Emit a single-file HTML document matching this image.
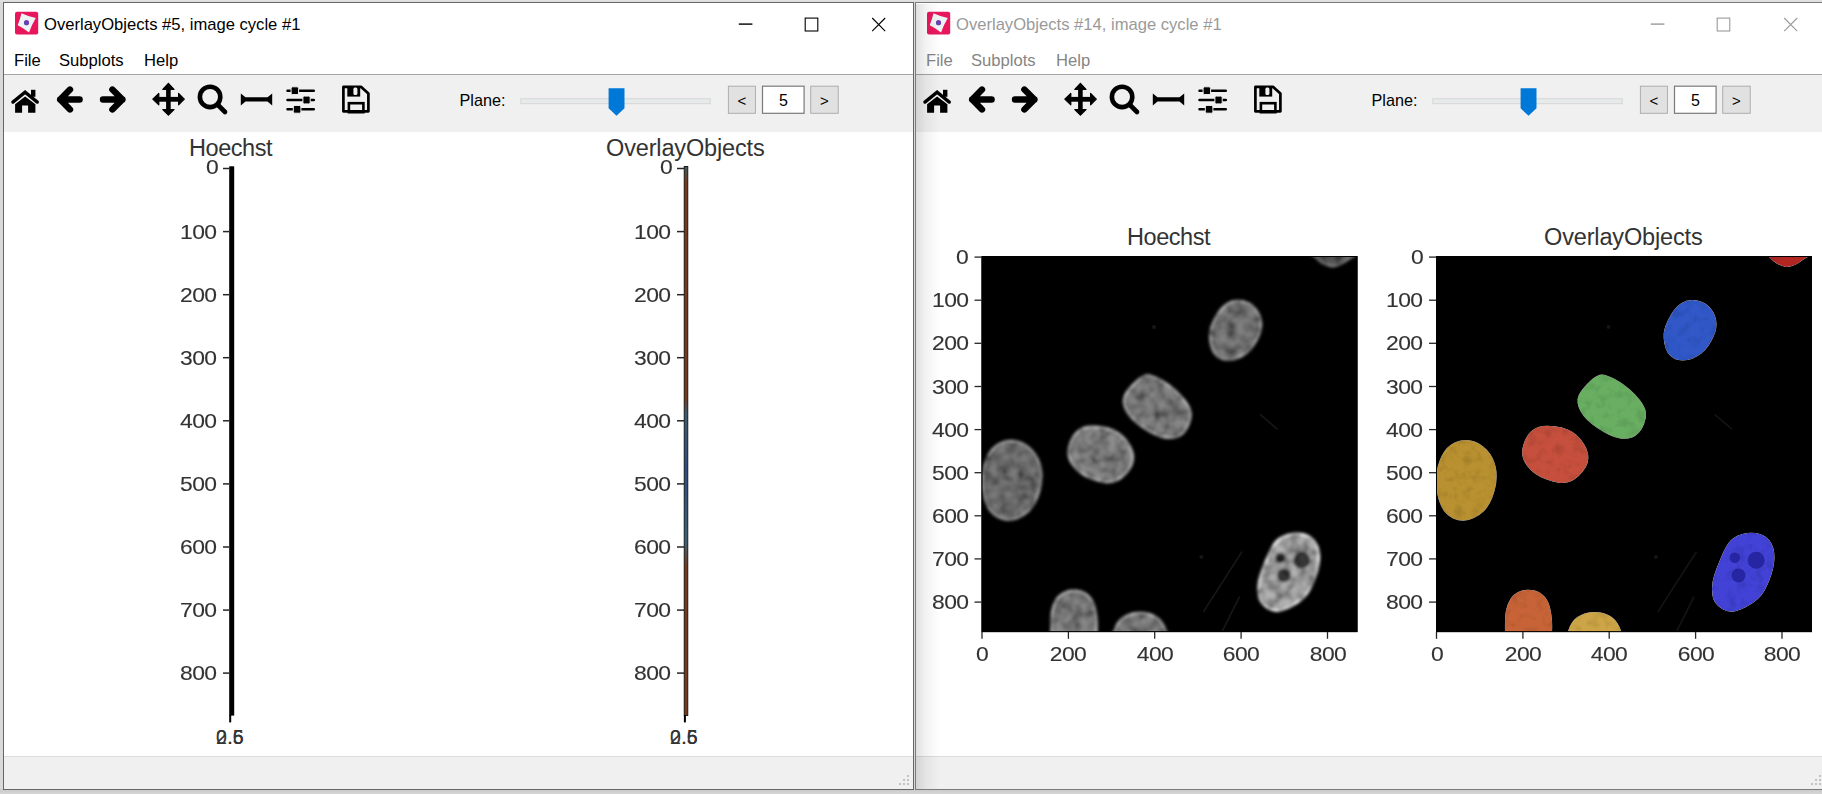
<!DOCTYPE html><html><head><meta charset="utf-8"><style>
*{margin:0;padding:0;box-sizing:border-box}
html,body{width:1822px;height:794px;overflow:hidden;background:linear-gradient(to bottom,#e2e2e2 0px,#d9d9d9 3px,#d9d9d9 788px,#cbcbcb 790px,#d6d6d6 794px);font-family:"Liberation Sans",sans-serif;position:relative}
.a{position:absolute;white-space:nowrap}
.ui{font-size:16.6px;color:#000}
.lb{font-size:21px;color:#333;letter-spacing:-0.5px;-webkit-text-stroke:0.12px #333;transform:scaleX(1.09);transform-origin:100% 50%}
.lbc{transform-origin:50% 50%}
.tl{font-size:23.5px;color:#333;letter-spacing:-0.45px}
</style></head><body>
<div class="a" style="left:914.8px;top:2px;width:911px;height:787.8px;background:#fff;border:1.5px solid #7a7a7a"></div>
<svg class="a" style="left:912px;top:0px" width="912" height="794" viewBox="0 0 912 794">
<rect x="15" y="11.8" width="23.2" height="22.6" rx="2" fill="#e8175c"/>
<path d="M21.5,13.2 Q28.5,16.5 35.8,17.9 Q31.5,25 29,32.6 Q23.5,28 17.7,25.3 Q20,19.5 21.5,13.2Z" fill="#eef4f4"/>
<circle cx="26.5" cy="22.7" r="2.6" fill="#6a3fb5"/>
<!-- min max close -->
<rect x="738.8" y="23.4" width="13.6" height="1.4" fill="#9a9a9a"/>
<rect x="805.2" y="18.1" width="12.6" height="12.9" fill="none" stroke="#9a9a9a" stroke-width="1.1"/>
<path d="M872.2,18 L885.2,31.2 M885.2,18 L872.2,31.2" stroke="#9a9a9a" stroke-width="1.1"/>
</svg>
<div class="a ui" style="left:956px;top:15px;color:#9a9a9a">OverlayObjects #14, image cycle #1</div>
<div class="a ui" style="left:926px;top:51px;color:#858585">File</div>
<div class="a ui" style="left:971px;top:51px;color:#858585">Subplots</div>
<div class="a ui" style="left:1056px;top:51px;color:#858585">Help</div>
<div class="a" style="left:916px;top:73.6px;width:909px;height:2px;background:#a6a6a6"></div>
<div class="a" style="left:916px;top:75px;width:909px;height:56.8px;background:#f0f0f0"></div>
<div class="a" style="left:916px;top:756px;width:909px;height:33px;background:#f0f0f0;border-top:1.5px solid #dcdcdc"></div>
<svg class="a" style="left:912px;top:0px" width="912" height="794" viewBox="0 0 912 794">
<g fill="#000" stroke="none">
<path d="M12.9,102.1 L25.1,92.2 L37.3,102.1" fill="none" stroke="#000" stroke-width="3.3" stroke-linecap="round" stroke-linejoin="miter"/>
<rect x="31" y="89.8" width="4.4" height="7"/>
<path d="M25.1,96.4 L35.4,104.3 L35.4,112.8 L28.1,112.8 L28.1,105.4 L22.1,105.4 L22.1,112.8 L15.1,112.8 L15.1,104.3Z"/>
</g>
<g fill="none" stroke="#000" stroke-width="6.4" stroke-linecap="round" stroke-linejoin="round">
<path d="M70,89.6 L60.2,99.5 L70,109.4 M60.2,99.5 L79.6,99.5"/>
<path d="M112.4,89.6 L122.4,99.5 L112.4,109.4 M122.4,99.5 L103,99.5"/>
</g>
<g fill="#000">
<rect x="166.1" y="87" width="4.6" height="24"/>
<rect x="156" y="96.9" width="25" height="4.8"/>
<path d="M168.4,83.3 L174,89.5 L162.8,89.5Z M168.4,115.2 L174,109.5 L162.8,109.5Z M152.8,99.1 L158.8,93.5 L158.8,104.8Z M184.3,99.1 L178.6,93.5 L178.6,104.8Z" stroke="#000" stroke-width="1.2" stroke-linejoin="round"/>
</g>
<circle cx="210.1" cy="96.9" r="10.2" fill="none" stroke="#000" stroke-width="4.6"/>
<path d="M218.5,105.5 L225,112" stroke="#000" stroke-width="4.6" stroke-linecap="round"/>
<path d="M240.8,93.6 L245.5,97.2 L267.5,97.2 L272.2,93.6 L272.2,105.4 L267.5,101.6 L245.5,101.6 L240.8,105.4Z" fill="#000"/>
<g stroke="#000" stroke-width="2.5" stroke-linecap="round" fill="none">
<path d="M287.5,90.8 L313.8,90.8 M287.5,100.1 L313.8,100.1 M287.5,109.2 L313.8,109.2"/>
</g>
<g fill="#000" stroke="#f0f0f0" stroke-width="1">
<rect x="291.1" y="86.8" width="7.5" height="7.8" rx="1.5"/>
<rect x="302.9" y="96.1" width="7.3" height="7.8" rx="1.5"/>
<rect x="293.3" y="105.4" width="7.6" height="7.8" rx="1.5"/>
</g>
<path d="M343.4,86.9 L361.2,86.9 L368.4,93.6 L368.4,111.3 L343.4,111.3Z" fill="none" stroke="#000" stroke-width="2.7" stroke-linejoin="round"/>
<path d="M347.3,86 L360.2,86 L360.2,96.6 L347.3,96.6Z" fill="#000"/>
<rect x="353.4" y="87.6" width="4" height="7.3" rx="1.5" fill="#f0f0f0"/>
<rect x="348.9" y="103.2" width="14.5" height="9" fill="none" stroke="#000" stroke-width="2.6"/>
<!-- slider -->
<rect x="520.8" y="98.7" width="189.4" height="5" fill="#e7eaea" stroke="#d6d6d6" stroke-width="1"/>
<path d="M608.6,88.2 L624.5,88.2 L624.5,108.2 L616.5,115.8 L608.6,108.2Z" fill="#0078d7"/>
<!-- buttons -->
<rect x="728.4" y="86.2" width="27" height="27.1" fill="#e1e1e1" stroke="#adadad" stroke-width="1"/>
<rect x="762.5" y="86.2" width="41.6" height="27.1" fill="#fff" stroke="#7a7a7a" stroke-width="1.2"/>
<rect x="810.7" y="86.2" width="27.5" height="27.1" fill="#e1e1e1" stroke="#adadad" stroke-width="1"/>
</svg>
<div class="a ui" style="left:1371.5px;top:91px;font-size:16.2px">Plane:</div>
<div class="a ui" style="left:1649.5px;top:91.5px;font-size:15px">&lt;</div>
<div class="a ui" style="left:1691px;top:91.5px;font-size:16px">5</div>
<div class="a ui" style="left:1732px;top:91.5px;font-size:15px">&gt;</div>
<svg class="a" style="left:1808px;top:772px" width="16" height="16"><g fill="#c2c2c2">
<rect x="3" y="11" width="2" height="2"/><rect x="7" y="11" width="2" height="2"/><rect x="11" y="11" width="2" height="2"/>
<rect x="7" y="7" width="2" height="2"/><rect x="11" y="7" width="2" height="2"/><rect x="11" y="3" width="2" height="2"/></g></svg>
<svg class="a" width="0" height="0" style="left:0;top:0"><defs>
<filter id="texg" x="-10%" y="-10%" width="120%" height="120%">
 <feTurbulence type="fractalNoise" baseFrequency="0.11" numOctaves="3" seed="11" result="n"/>
 <feColorMatrix in="n" type="saturate" values="0" result="ng"/>
 <feComponentTransfer in="ng" result="nb"><feFuncR type="linear" slope="2.0" intercept="-0.3"/><feFuncG type="linear" slope="2.0" intercept="-0.3"/><feFuncB type="linear" slope="2.0" intercept="-0.3"/><feFuncA type="linear" slope="0" intercept="1"/></feComponentTransfer>
 <feBlend in="SourceGraphic" in2="nb" mode="multiply" result="m"/>
 <feComposite in="m" in2="SourceGraphic" operator="in" result="c"/>
 <feGaussianBlur in="c" stdDeviation="1.7"/>
</filter>
<filter id="texc" x="-10%" y="-10%" width="120%" height="120%">
 <feTurbulence type="fractalNoise" baseFrequency="0.11" numOctaves="3" seed="11" result="n"/>
 <feColorMatrix in="n" type="saturate" values="0" result="ng"/>
 <feComponentTransfer in="ng" result="nb"><feFuncR type="linear" slope="0.7" intercept="0.62"/><feFuncG type="linear" slope="0.7" intercept="0.62"/><feFuncB type="linear" slope="0.7" intercept="0.62"/><feFuncA type="linear" slope="0" intercept="1"/></feComponentTransfer>
 <feBlend in="SourceGraphic" in2="nb" mode="multiply" result="m"/>
 <feComposite in="m" in2="SourceGraphic" operator="in" result="c"/>
 <feGaussianBlur in="c" stdDeviation="0.7"/>
</filter>
</defs></svg>
<div class="a tl" style="left:1127px;top:224px;">Hoechst</div>
<div class="a lb" style="right:853.5px;top:245.1px">0</div>
<div class="a lb" style="right:853.5px;top:288.2px">100</div>
<div class="a lb" style="right:853.5px;top:331.3px">200</div>
<div class="a lb" style="right:853.5px;top:374.5px">300</div>
<div class="a lb" style="right:853.5px;top:417.6px">400</div>
<div class="a lb" style="right:853.5px;top:460.7px">500</div>
<div class="a lb" style="right:853.5px;top:503.8px">600</div>
<div class="a lb" style="right:853.5px;top:546.9px">700</div>
<div class="a lb" style="right:853.5px;top:590.1px">800</div>
<div class="a lb lbc" style="left:952.0px;top:642px;width:60px;text-align:center">0</div>
<div class="a lb lbc" style="left:1038.4px;top:642px;width:60px;text-align:center">200</div>
<div class="a lb lbc" style="left:1124.7px;top:642px;width:60px;text-align:center">400</div>
<div class="a lb lbc" style="left:1211.1px;top:642px;width:60px;text-align:center">600</div>
<div class="a lb lbc" style="left:1297.5px;top:642px;width:60px;text-align:center">800</div>
<svg class="a" style="left:0;top:0" width="1822" height="794">
<defs><clipPath id="clip981"><rect x="981.5" y="256" width="376" height="376.1"/></clipPath></defs>
<rect x="981.5" y="256" width="376" height="376.1" fill="#000"/>
<g clip-path="url(#clip981)"><path d="M1203.7,611.4 L1241.6,552.2" stroke="#171717" stroke-width="1.6" stroke-linecap="round"/>
<path d="M1222.7,630.4 L1239.3,597.2" stroke="#171717" stroke-width="1.6" stroke-linecap="round"/>
<path d="M1260.6,414.8 L1277.2,429" stroke="#171717" stroke-width="1.6" stroke-linecap="round"/>
<circle cx="1154.0" cy="327" r="2" fill="#171717"/>
<circle cx="1201.4" cy="557" r="2" fill="#171717"/></g>
<g clip-path="url(#clip981)"><g filter="url(#texg)"><path d="M1311.0,250.0 C1317.8,248.8 1350.8,248.5 1357.0,250.0 C1363.2,251.5 1350.8,256.7 1348.0,259.0 C1345.2,261.3 1342.7,262.8 1340.0,264.0 C1337.3,265.2 1334.8,266.2 1332.0,266.0 C1329.2,265.8 1325.7,264.5 1323.0,263.0 C1320.3,261.5 1318.0,259.2 1316.0,257.0 C1314.0,254.8 1304.2,251.2 1311.0,250.0Z" fill="rgb(91,91,91)" stroke="rgb(122,122,122)" stroke-width="2.5"/>
<path d="M1238.4,301.1 C1242.6,301.4 1248.8,302.9 1252.5,306.1 C1256.2,309.3 1259.6,315.3 1260.6,320.2 C1261.6,325.1 1260.8,330.0 1258.5,335.4 C1256.2,340.8 1251.5,348.5 1246.5,352.5 C1241.5,356.5 1233.7,359.6 1228.3,359.6 C1222.9,359.6 1217.2,356.9 1214.2,352.5 C1211.2,348.1 1209.7,339.5 1210.2,333.3 C1210.7,327.1 1214.4,320.1 1217.2,315.2 C1220.0,310.3 1223.8,306.5 1227.3,304.1 C1230.8,301.8 1234.2,300.8 1238.4,301.1Z" fill="rgb(127,127,127)" stroke="rgb(171,171,171)" stroke-width="2.5"/>
<path d="M1125.3,395.3 C1128.0,389.6 1137.3,379.5 1142.9,376.8 C1148.5,374.1 1152.6,376.3 1158.8,379.4 C1165.0,382.5 1174.6,389.7 1179.9,395.3 C1185.2,400.9 1189.9,406.7 1190.5,412.9 C1191.1,419.1 1187.6,428.2 1183.5,432.3 C1179.4,436.4 1172.6,438.5 1165.8,437.6 C1159.0,436.7 1149.4,431.4 1142.9,427.0 C1136.4,422.6 1129.9,416.4 1127.0,411.1 C1124.1,405.8 1122.6,401.0 1125.3,395.3Z" fill="rgb(135,135,135)" stroke="rgb(182,182,182)" stroke-width="2.5"/>
<path d="M1088.2,427.0 C1094.7,426.1 1106.1,427.6 1112.9,430.5 C1119.7,433.4 1125.6,439.4 1128.8,444.7 C1132.0,450.0 1133.8,456.7 1132.3,462.3 C1130.8,467.9 1124.7,475.0 1120.0,478.2 C1115.3,481.4 1110.6,482.6 1104.1,481.7 C1097.6,480.8 1087.1,477.3 1081.2,472.9 C1075.3,468.5 1070.0,461.4 1068.8,455.2 C1067.6,449.0 1070.9,440.5 1074.1,435.8 C1077.3,431.1 1081.7,427.9 1088.2,427.0Z" fill="rgb(140,140,140)" stroke="rgb(189,189,189)" stroke-width="2.5"/>
<path d="M1014.8,441.2 C1020.6,442.0 1027.1,445.8 1031.4,450.3 C1035.7,454.8 1039.2,461.6 1040.5,468.4 C1041.8,475.2 1041.0,484.0 1039.0,491.1 C1037.0,498.2 1033.5,506.0 1028.4,510.8 C1023.4,515.6 1015.0,519.8 1008.7,519.8 C1002.4,519.8 995.0,516.6 990.6,510.8 C986.2,505.0 983.0,493.4 982.3,485.1 C981.5,476.8 983.7,467.4 986.1,460.8 C988.5,454.2 991.8,449.0 996.6,445.7 C1001.4,442.4 1009.0,440.4 1014.8,441.2Z" fill="rgb(122,122,122)" stroke="rgb(164,164,164)" stroke-width="2.5"/>
<path d="M1073.9,590.8 C1077.4,590.9 1081.9,591.6 1085.0,593.5 C1088.1,595.4 1090.7,598.3 1092.5,602.0 C1094.3,605.7 1095.3,610.6 1096.0,615.6 C1096.7,620.6 1096.8,627.1 1096.5,632.0 C1096.2,636.9 1101.2,642.8 1094.0,645.0 C1086.8,647.2 1060.1,647.2 1053.0,645.0 C1045.9,642.8 1051.6,637.5 1051.5,632.0 C1051.4,626.5 1051.3,617.5 1052.2,612.0 C1053.1,606.5 1055.0,602.2 1057.0,599.0 C1059.0,595.8 1061.2,594.4 1064.0,593.0 C1066.8,591.6 1070.4,590.7 1073.9,590.8Z" fill="rgb(135,135,135)" stroke="rgb(182,182,182)" stroke-width="2.5"/>
<path d="M1140.0,613.0 C1145.7,613.0 1152.7,614.8 1157.0,618.0 C1161.3,621.2 1164.5,627.5 1166.0,632.0 C1167.5,636.5 1174.7,642.8 1166.0,645.0 C1157.3,647.2 1122.5,647.5 1114.0,645.0 C1105.5,642.5 1113.5,634.5 1115.0,630.0 C1116.5,625.5 1118.8,620.8 1123.0,618.0 C1127.2,615.2 1134.3,613.0 1140.0,613.0Z" fill="rgb(135,135,135)" stroke="rgb(182,182,182)" stroke-width="2.5"/>
<path d="M1292.9,533.9 C1298.6,533.3 1306.2,534.5 1310.5,537.6 C1314.8,540.7 1317.9,546.4 1318.7,552.7 C1319.5,559.0 1318.2,567.8 1315.6,575.4 C1313.0,583.0 1309.3,592.2 1303.0,598.1 C1296.7,604.0 1284.7,610.1 1277.8,610.7 C1270.9,611.3 1264.6,606.5 1261.4,601.9 C1258.2,597.3 1258.1,589.9 1258.9,583.0 C1259.7,576.1 1263.5,567.2 1266.4,560.3 C1269.3,553.4 1272.1,545.8 1276.5,541.4 C1280.9,537.0 1287.2,534.5 1292.9,533.9Z" fill="rgb(178,178,178)" stroke="rgb(240,240,240)" stroke-width="2.5"/>
<circle cx="1301.7" cy="560.3" r="8.5" fill="rgb(55,55,55)"/>
<circle cx="1284.0" cy="575.4" r="7.0" fill="rgb(55,55,55)"/>
<circle cx="1280.3" cy="557.8" r="5.2" fill="rgb(55,55,55)"/></g></g>
<rect x="982.0" y="256.5" width="375" height="375.1" fill="none" stroke="#000" stroke-width="1"/>
<g stroke="#262626" stroke-width="1.3">
<path d="M974.5,257.1 L981.5,257.1"/>
<path d="M974.5,300.2 L981.5,300.2"/>
<path d="M974.5,343.3 L981.5,343.3"/>
<path d="M974.5,386.5 L981.5,386.5"/>
<path d="M974.5,429.6 L981.5,429.6"/>
<path d="M974.5,472.7 L981.5,472.7"/>
<path d="M974.5,515.8 L981.5,515.8"/>
<path d="M974.5,558.9 L981.5,558.9"/>
<path d="M974.5,602.1 L981.5,602.1"/>
<path d="M982.0,632 L982.0,638.8"/>
<path d="M1068.4,632 L1068.4,638.8"/>
<path d="M1154.7,632 L1154.7,638.8"/>
<path d="M1241.1,632 L1241.1,638.8"/>
<path d="M1327.5,632 L1327.5,638.8"/>
</g></svg>
<div class="a tl" style="left:1544px;top:224px;letter-spacing:-0.15px">OverlayObjects</div>
<div class="a lb" style="right:399.0px;top:245.1px">0</div>
<div class="a lb" style="right:399.0px;top:288.2px">100</div>
<div class="a lb" style="right:399.0px;top:331.3px">200</div>
<div class="a lb" style="right:399.0px;top:374.5px">300</div>
<div class="a lb" style="right:399.0px;top:417.6px">400</div>
<div class="a lb" style="right:399.0px;top:460.7px">500</div>
<div class="a lb" style="right:399.0px;top:503.8px">600</div>
<div class="a lb" style="right:399.0px;top:546.9px">700</div>
<div class="a lb" style="right:399.0px;top:590.1px">800</div>
<div class="a lb lbc" style="left:1406.5px;top:642px;width:60px;text-align:center">0</div>
<div class="a lb lbc" style="left:1492.9px;top:642px;width:60px;text-align:center">200</div>
<div class="a lb lbc" style="left:1579.2px;top:642px;width:60px;text-align:center">400</div>
<div class="a lb lbc" style="left:1665.6px;top:642px;width:60px;text-align:center">600</div>
<div class="a lb lbc" style="left:1752.0px;top:642px;width:60px;text-align:center">800</div>
<svg class="a" style="left:0;top:0" width="1822" height="794">
<defs><clipPath id="clip1436"><rect x="1436" y="256" width="376" height="376.1"/></clipPath></defs>
<rect x="1436" y="256" width="376" height="376.1" fill="#000"/>
<g clip-path="url(#clip1436)"><path d="M1658.2,611.4 L1696.1,552.2" stroke="#141414" stroke-width="1.6" stroke-linecap="round"/>
<path d="M1677.2,630.4 L1693.8,597.2" stroke="#141414" stroke-width="1.6" stroke-linecap="round"/>
<path d="M1715.1,414.8 L1731.7,429" stroke="#141414" stroke-width="1.6" stroke-linecap="round"/>
<circle cx="1608.5" cy="327" r="2" fill="#141414"/>
<circle cx="1655.9" cy="557" r="2" fill="#141414"/></g>
<g clip-path="url(#clip1436)"><g filter="url(#texc)"><path d="M1765.5,250.0 C1772.3,248.8 1805.3,248.5 1811.5,250.0 C1817.7,251.5 1805.3,256.7 1802.5,259.0 C1799.7,261.3 1797.2,262.8 1794.5,264.0 C1791.8,265.2 1789.3,266.2 1786.5,266.0 C1783.7,265.8 1780.2,264.5 1777.5,263.0 C1774.8,261.5 1772.5,259.2 1770.5,257.0 C1768.5,254.8 1758.7,251.2 1765.5,250.0Z" fill="rgb(180,40,35)" stroke="rgb(180,40,35)" stroke-width="2"/>
<path d="M1692.9,301.1 C1697.1,301.4 1703.3,302.9 1707.0,306.1 C1710.7,309.3 1714.1,315.3 1715.1,320.2 C1716.1,325.1 1715.3,330.0 1713.0,335.4 C1710.7,340.8 1706.0,348.5 1701.0,352.5 C1696.0,356.5 1688.2,359.6 1682.8,359.6 C1677.4,359.6 1671.7,356.9 1668.7,352.5 C1665.7,348.1 1664.2,339.5 1664.7,333.3 C1665.2,327.1 1668.9,320.1 1671.7,315.2 C1674.5,310.3 1678.3,306.5 1681.8,304.1 C1685.3,301.8 1688.7,300.8 1692.9,301.1Z" fill="rgb(48,88,200)" stroke="rgb(48,88,200)" stroke-width="2"/>
<path d="M1579.8,395.3 C1582.5,389.6 1591.8,379.5 1597.4,376.8 C1603.0,374.1 1607.1,376.3 1613.3,379.4 C1619.5,382.5 1629.1,389.7 1634.4,395.3 C1639.7,400.9 1644.4,406.7 1645.0,412.9 C1645.6,419.1 1642.1,428.2 1638.0,432.3 C1633.9,436.4 1627.1,438.5 1620.3,437.6 C1613.5,436.7 1603.9,431.4 1597.4,427.0 C1590.9,422.6 1584.4,416.4 1581.5,411.1 C1578.6,405.8 1577.1,401.0 1579.8,395.3Z" fill="rgb(105,175,98)" stroke="rgb(105,175,98)" stroke-width="2"/>
<path d="M1542.7,427.0 C1549.2,426.1 1560.6,427.6 1567.4,430.5 C1574.2,433.4 1580.1,439.4 1583.3,444.7 C1586.5,450.0 1588.3,456.7 1586.8,462.3 C1585.3,467.9 1579.2,475.0 1574.5,478.2 C1569.8,481.4 1565.1,482.6 1558.6,481.7 C1552.1,480.8 1541.6,477.3 1535.7,472.9 C1529.8,468.5 1524.5,461.4 1523.3,455.2 C1522.1,449.0 1525.4,440.5 1528.6,435.8 C1531.8,431.1 1536.2,427.9 1542.7,427.0Z" fill="rgb(198,80,60)" stroke="rgb(198,80,60)" stroke-width="2"/>
<path d="M1469.3,441.2 C1475.1,442.0 1481.6,445.8 1485.9,450.3 C1490.2,454.8 1493.7,461.6 1495.0,468.4 C1496.3,475.2 1495.5,484.0 1493.5,491.1 C1491.5,498.2 1488.0,506.0 1482.9,510.8 C1477.9,515.6 1469.5,519.8 1463.2,519.8 C1456.9,519.8 1449.5,516.6 1445.1,510.8 C1440.7,505.0 1437.5,493.4 1436.8,485.1 C1436.0,476.8 1438.2,467.4 1440.6,460.8 C1443.0,454.2 1446.3,449.0 1451.1,445.7 C1455.9,442.4 1463.5,440.4 1469.3,441.2Z" fill="rgb(185,145,48)" stroke="rgb(185,145,48)" stroke-width="2"/>
<path d="M1528.4,590.8 C1531.9,590.9 1536.4,591.6 1539.5,593.5 C1542.6,595.4 1545.2,598.3 1547.0,602.0 C1548.8,605.7 1549.8,610.6 1550.5,615.6 C1551.2,620.6 1551.3,627.1 1551.0,632.0 C1550.7,636.9 1555.8,642.8 1548.5,645.0 C1541.2,647.2 1514.6,647.2 1507.5,645.0 C1500.4,642.8 1506.1,637.5 1506.0,632.0 C1505.9,626.5 1505.8,617.5 1506.7,612.0 C1507.6,606.5 1509.5,602.2 1511.5,599.0 C1513.5,595.8 1515.7,594.4 1518.5,593.0 C1521.3,591.6 1524.9,590.7 1528.4,590.8Z" fill="rgb(200,100,55)" stroke="rgb(200,100,55)" stroke-width="2"/>
<path d="M1594.5,613.0 C1600.2,613.0 1607.2,614.8 1611.5,618.0 C1615.8,621.2 1619.0,627.5 1620.5,632.0 C1622.0,636.5 1629.2,642.8 1620.5,645.0 C1611.8,647.2 1577.0,647.5 1568.5,645.0 C1560.0,642.5 1568.0,634.5 1569.5,630.0 C1571.0,625.5 1573.3,620.8 1577.5,618.0 C1581.7,615.2 1588.8,613.0 1594.5,613.0Z" fill="rgb(205,165,70)" stroke="rgb(205,165,70)" stroke-width="2"/>
<path d="M1747.4,533.9 C1753.1,533.3 1760.7,534.5 1765.0,537.6 C1769.3,540.7 1772.4,546.4 1773.2,552.7 C1774.0,559.0 1772.7,567.8 1770.1,575.4 C1767.5,583.0 1763.8,592.2 1757.5,598.1 C1751.2,604.0 1739.2,610.1 1732.3,610.7 C1725.4,611.3 1719.1,606.5 1715.9,601.9 C1712.8,597.3 1712.6,589.9 1713.4,583.0 C1714.2,576.1 1718.0,567.2 1720.9,560.3 C1723.8,553.4 1726.6,545.8 1731.0,541.4 C1735.4,537.0 1741.7,534.5 1747.4,533.9Z" fill="rgb(66,66,215)" stroke="rgb(66,66,215)" stroke-width="2"/>
<circle cx="1756.2" cy="560.3" r="8.5" fill="rgb(38,38,165)"/>
<circle cx="1738.5" cy="575.4" r="7.0" fill="rgb(38,38,165)"/>
<circle cx="1734.8" cy="557.8" r="5.2" fill="rgb(38,38,165)"/></g></g>
<rect x="1436.5" y="256.5" width="375" height="375.1" fill="none" stroke="#000" stroke-width="1"/>
<g stroke="#262626" stroke-width="1.3">
<path d="M1429,257.1 L1436,257.1"/>
<path d="M1429,300.2 L1436,300.2"/>
<path d="M1429,343.3 L1436,343.3"/>
<path d="M1429,386.5 L1436,386.5"/>
<path d="M1429,429.6 L1436,429.6"/>
<path d="M1429,472.7 L1436,472.7"/>
<path d="M1429,515.8 L1436,515.8"/>
<path d="M1429,558.9 L1436,558.9"/>
<path d="M1429,602.1 L1436,602.1"/>
<path d="M1436.5,632 L1436.5,638.8"/>
<path d="M1522.9,632 L1522.9,638.8"/>
<path d="M1609.2,632 L1609.2,638.8"/>
<path d="M1695.6,632 L1695.6,638.8"/>
<path d="M1782.0,632 L1782.0,638.8"/>
</g></svg>
<div class="a" style="left:916px;top:3.5px;width:24px;height:785px;background:linear-gradient(to right,rgba(0,0,0,0.12),rgba(0,0,0,0.05) 40%,rgba(0,0,0,0))"></div>
<div class="a" style="left:2.8px;top:2px;width:911px;height:787.8px;background:#fff;border:1.5px solid #666"></div>
<svg class="a" style="left:0px;top:0px" width="912" height="794" viewBox="0 0 912 794">
<rect x="15" y="11.8" width="23.2" height="22.6" rx="2" fill="#e8175c"/>
<path d="M21.5,13.2 Q28.5,16.5 35.8,17.9 Q31.5,25 29,32.6 Q23.5,28 17.7,25.3 Q20,19.5 21.5,13.2Z" fill="#eef4f4"/>
<circle cx="26.5" cy="22.7" r="2.6" fill="#6a3fb5"/>
<!-- min max close -->
<rect x="738.8" y="23.4" width="13.6" height="1.4" fill="#000"/>
<rect x="805.2" y="18.1" width="12.6" height="12.9" fill="none" stroke="#000" stroke-width="1.1"/>
<path d="M872.2,18 L885.2,31.2 M885.2,18 L872.2,31.2" stroke="#000" stroke-width="1.1"/>
</svg>
<div class="a ui" style="left:44px;top:15px;color:#000">OverlayObjects #5, image cycle #1</div>
<div class="a ui" style="left:14px;top:51px;color:#000">File</div>
<div class="a ui" style="left:59px;top:51px;color:#000">Subplots</div>
<div class="a ui" style="left:144px;top:51px;color:#000">Help</div>
<div class="a" style="left:4px;top:73.6px;width:909px;height:2px;background:#a6a6a6"></div>
<div class="a" style="left:4px;top:75px;width:909px;height:56.8px;background:#f0f0f0"></div>
<div class="a" style="left:4px;top:756px;width:909px;height:33px;background:#f0f0f0;border-top:1.5px solid #dcdcdc"></div>
<svg class="a" style="left:0px;top:0px" width="912" height="794" viewBox="0 0 912 794">
<g fill="#000" stroke="none">
<path d="M12.9,102.1 L25.1,92.2 L37.3,102.1" fill="none" stroke="#000" stroke-width="3.3" stroke-linecap="round" stroke-linejoin="miter"/>
<rect x="31" y="89.8" width="4.4" height="7"/>
<path d="M25.1,96.4 L35.4,104.3 L35.4,112.8 L28.1,112.8 L28.1,105.4 L22.1,105.4 L22.1,112.8 L15.1,112.8 L15.1,104.3Z"/>
</g>
<g fill="none" stroke="#000" stroke-width="6.4" stroke-linecap="round" stroke-linejoin="round">
<path d="M70,89.6 L60.2,99.5 L70,109.4 M60.2,99.5 L79.6,99.5"/>
<path d="M112.4,89.6 L122.4,99.5 L112.4,109.4 M122.4,99.5 L103,99.5"/>
</g>
<g fill="#000">
<rect x="166.1" y="87" width="4.6" height="24"/>
<rect x="156" y="96.9" width="25" height="4.8"/>
<path d="M168.4,83.3 L174,89.5 L162.8,89.5Z M168.4,115.2 L174,109.5 L162.8,109.5Z M152.8,99.1 L158.8,93.5 L158.8,104.8Z M184.3,99.1 L178.6,93.5 L178.6,104.8Z" stroke="#000" stroke-width="1.2" stroke-linejoin="round"/>
</g>
<circle cx="210.1" cy="96.9" r="10.2" fill="none" stroke="#000" stroke-width="4.6"/>
<path d="M218.5,105.5 L225,112" stroke="#000" stroke-width="4.6" stroke-linecap="round"/>
<path d="M240.8,93.6 L245.5,97.2 L267.5,97.2 L272.2,93.6 L272.2,105.4 L267.5,101.6 L245.5,101.6 L240.8,105.4Z" fill="#000"/>
<g stroke="#000" stroke-width="2.5" stroke-linecap="round" fill="none">
<path d="M287.5,90.8 L313.8,90.8 M287.5,100.1 L313.8,100.1 M287.5,109.2 L313.8,109.2"/>
</g>
<g fill="#000" stroke="#f0f0f0" stroke-width="1">
<rect x="291.1" y="86.8" width="7.5" height="7.8" rx="1.5"/>
<rect x="302.9" y="96.1" width="7.3" height="7.8" rx="1.5"/>
<rect x="293.3" y="105.4" width="7.6" height="7.8" rx="1.5"/>
</g>
<path d="M343.4,86.9 L361.2,86.9 L368.4,93.6 L368.4,111.3 L343.4,111.3Z" fill="none" stroke="#000" stroke-width="2.7" stroke-linejoin="round"/>
<path d="M347.3,86 L360.2,86 L360.2,96.6 L347.3,96.6Z" fill="#000"/>
<rect x="353.4" y="87.6" width="4" height="7.3" rx="1.5" fill="#f0f0f0"/>
<rect x="348.9" y="103.2" width="14.5" height="9" fill="none" stroke="#000" stroke-width="2.6"/>
<!-- slider -->
<rect x="520.8" y="98.7" width="189.4" height="5" fill="#e7eaea" stroke="#d6d6d6" stroke-width="1"/>
<path d="M608.6,88.2 L624.5,88.2 L624.5,108.2 L616.5,115.8 L608.6,108.2Z" fill="#0078d7"/>
<!-- buttons -->
<rect x="728.4" y="86.2" width="27" height="27.1" fill="#e1e1e1" stroke="#adadad" stroke-width="1"/>
<rect x="762.5" y="86.2" width="41.6" height="27.1" fill="#fff" stroke="#7a7a7a" stroke-width="1.2"/>
<rect x="810.7" y="86.2" width="27.5" height="27.1" fill="#e1e1e1" stroke="#adadad" stroke-width="1"/>
</svg>
<div class="a ui" style="left:459.5px;top:91px;font-size:16.2px">Plane:</div>
<div class="a ui" style="left:737.5px;top:91.5px;font-size:15px">&lt;</div>
<div class="a ui" style="left:779px;top:91.5px;font-size:16px">5</div>
<div class="a ui" style="left:820px;top:91.5px;font-size:15px">&gt;</div>
<svg class="a" style="left:896px;top:772px" width="16" height="16"><g fill="#c2c2c2">
<rect x="3" y="11" width="2" height="2"/><rect x="7" y="11" width="2" height="2"/><rect x="11" y="11" width="2" height="2"/>
<rect x="7" y="7" width="2" height="2"/><rect x="11" y="7" width="2" height="2"/><rect x="11" y="3" width="2" height="2"/></g></svg>
<div class="a tl" style="left:189px;top:135px">Hoechst</div>
<div class="a tl" style="left:606px;top:135px;letter-spacing:-0.15px">OverlayObjects</div>
<div class="a lb" style="right:1603.8px;top:155.3px">0</div>
<div class="a lb" style="right:1605.8px;top:219.6px">100</div>
<div class="a lb" style="right:1605.8px;top:282.7px">200</div>
<div class="a lb" style="right:1605.8px;top:345.7px">300</div>
<div class="a lb" style="right:1605.8px;top:408.8px">400</div>
<div class="a lb" style="right:1605.8px;top:471.9px">500</div>
<div class="a lb" style="right:1605.8px;top:535.0px">600</div>
<div class="a lb" style="right:1605.8px;top:598.1px">700</div>
<div class="a lb" style="right:1605.8px;top:661.1px">800</div>
<div class="a lb" style="right:1149.8px;top:155.3px">0</div>
<div class="a lb" style="right:1151.8px;top:219.6px">100</div>
<div class="a lb" style="right:1151.8px;top:282.7px">200</div>
<div class="a lb" style="right:1151.8px;top:345.7px">300</div>
<div class="a lb" style="right:1151.8px;top:408.8px">400</div>
<div class="a lb" style="right:1151.8px;top:471.9px">500</div>
<div class="a lb" style="right:1151.8px;top:535.0px">600</div>
<div class="a lb" style="right:1151.8px;top:598.1px">700</div>
<div class="a lb" style="right:1151.8px;top:661.1px">800</div>
<svg class="a" style="left:0;top:0" width="912" height="794">
<g stroke="#262626" stroke-width="1.5">
<path d="M223,168.5 L229,168.5"/><path d="M677,168.5 L684,168.5"/>
<path d="M223,231.6 L229,231.6"/><path d="M677,231.6 L684,231.6"/>
<path d="M223,294.7 L229,294.7"/><path d="M677,294.7 L684,294.7"/>
<path d="M223,357.7 L229,357.7"/><path d="M677,357.7 L684,357.7"/>
<path d="M223,420.8 L229,420.8"/><path d="M677,420.8 L684,420.8"/>
<path d="M223,483.9 L229,483.9"/><path d="M677,483.9 L684,483.9"/>
<path d="M223,547.0 L229,547.0"/><path d="M677,547.0 L684,547.0"/>
<path d="M223,610.1 L229,610.1"/><path d="M677,610.1 L684,610.1"/>
<path d="M223,673.1 L229,673.1"/><path d="M677,673.1 L684,673.1"/>
</g>
<rect x="229.2" y="166.3" width="5" height="549.3" fill="#000"/>
<rect x="229.2" y="715" width="2" height="7.4" fill="#000"/>
<defs><linearGradient id="barg" x1="0" y1="166" x2="0" y2="716" gradientUnits="userSpaceOnUse">
<stop offset="0" stop-color="#3a5a5a"/><stop offset="0.03" stop-color="#74381a"/>
<stop offset="0.42" stop-color="#74381a"/><stop offset="0.45" stop-color="#3e5a70"/><stop offset="0.55" stop-color="#2e4c80"/>
<stop offset="0.68" stop-color="#3a6278"/><stop offset="0.73" stop-color="#74381a"/><stop offset="1" stop-color="#74381a"/>
</linearGradient></defs>
<rect x="684.2" y="166.5" width="3.6" height="549" fill="url(#barg)" stroke="#111" stroke-width="0.9"/>
<rect x="683.9" y="715" width="2" height="7.4" fill="#000"/>
</svg>
<div class="a lb" style="left:216px;top:726px;font-size:19.5px;transform:none;letter-spacing:0.3px">0.5</div>
<div class="a lb" style="left:216px;top:726px;font-size:19.5px;transform:none;letter-spacing:0.3px">2.6</div>
<div class="a lb" style="left:670px;top:726px;font-size:19.5px;transform:none;letter-spacing:0.3px">0.5</div>
<div class="a lb" style="left:670px;top:726px;font-size:19.5px;transform:none;letter-spacing:0.3px">2.6</div>
</body></html>
